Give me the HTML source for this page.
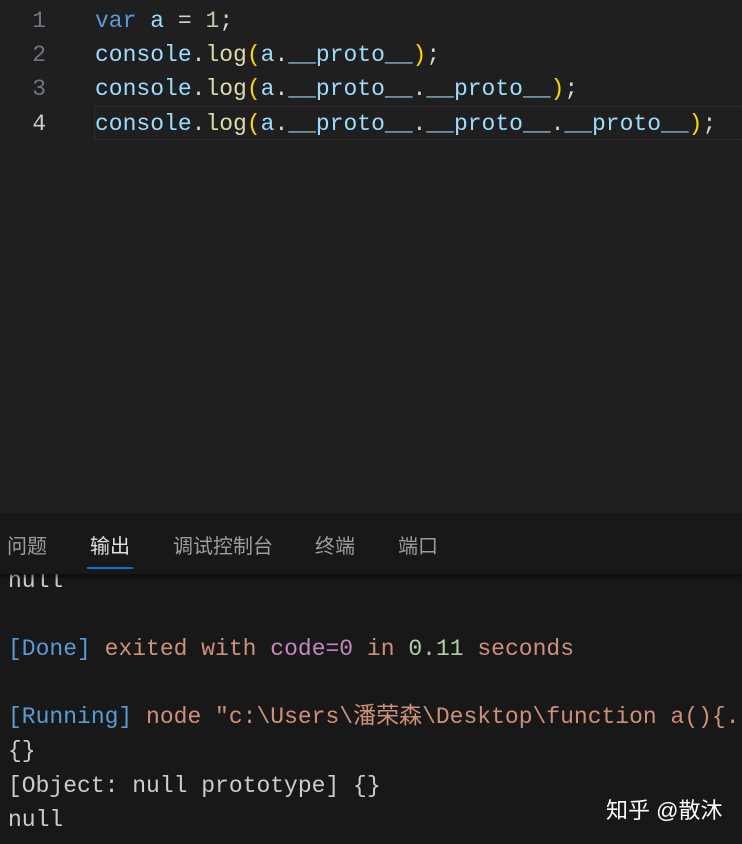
<!DOCTYPE html>
<html><head><meta charset="utf-8"><style>
body{margin:0;width:742px;height:843px;background:#1f1f1f;overflow:hidden;position:relative;font-family:"Liberation Mono","Noto Sans CJK SC",monospace;font-size:23px}
.l{position:absolute;white-space:pre;line-height:34px}
.n{color:#6e7681;width:46px;text-align:right;left:0}
.k{color:#569cd6}.v{color:#9cdcfe}.f{color:#dcdcaa}.p{color:#ffd700}.w{color:#d4d4d4}.num{color:#b5cea8}
#hl{position:absolute;left:94px;top:106px;width:660px;height:34px;border:1px solid #2c2c2c;box-sizing:border-box}
#panel{position:absolute;left:0;top:513px;width:742px;height:330px;background:#181818;border-top:1px solid #2b2b2b}
#tabs{position:absolute;left:0;top:513px;width:742px;height:61px;background:#181818;box-shadow:0 3px 4px rgba(0,0,0,.5);z-index:2;font-family:"Liberation Sans","Noto Sans CJK SC",sans-serif;font-size:20px;color:#9d9d9d}
#tabs span{position:absolute;top:17px}
#ul{position:absolute;left:87px;top:54px;width:46px;height:2px;background:#0078d4}
.o{color:#cccccc}
.bl{color:#569cd6}.or{color:#ce9178}.pu{color:#c586c0}.gr{color:#b5cea8}
</style></head><body>
<div id="hl"></div>
<div class="l n" style="top:4px">1</div>
<div class="l n" style="top:38px">2</div>
<div class="l n" style="top:72px">3</div>
<div class="l n" style="top:107px;color:#cccccc">4</div>
<div class="l" style="left:95px;top:4px"><span class="k">var</span> <span class="v">a</span> <span class="w">=</span> <span class="num">1</span><span class="w">;</span></div>
<div class="l" style="left:95px;top:38px"><span class="v">console</span><span class="w">.</span><span class="f">log</span><span class="p">(</span><span class="v">a</span><span class="w">.</span><span class="v">__proto__</span><span class="p">)</span><span class="w">;</span></div>
<div class="l" style="left:95px;top:72px"><span class="v">console</span><span class="w">.</span><span class="f">log</span><span class="p">(</span><span class="v">a</span><span class="w">.</span><span class="v">__proto__</span><span class="w">.</span><span class="v">__proto__</span><span class="p">)</span><span class="w">;</span></div>
<div class="l" style="left:95px;top:107px"><span class="v">console</span><span class="w">.</span><span class="f">log</span><span class="p">(</span><span class="v">a</span><span class="w">.</span><span class="v">__proto__</span><span class="w">.</span><span class="v">__proto__</span><span class="w">.</span><span class="v">__proto__</span><span class="p">)</span><span class="w">;</span></div>
<div id="panel"></div>
<div id="tabs"><span style="left:7px">问题</span><span style="left:90px;color:#e0e0e0">输出</span><span style="left:173px">调试控制台</span><span style="left:315px">终端</span><span style="left:398px">端口</span><div id="ul"></div></div>
<div class="l o" style="left:8px;top:564px">null</div>
<div class="l" style="left:8px;top:632px"><span class="bl">[Done]</span> <span class="or">exited with</span> <span class="pu">code=0</span> <span class="or">in</span> <span class="gr">0.11</span> <span class="or">seconds</span></div>
<div class="l" style="left:8px;top:700px"><span class="bl">[Running]</span> <span class="or">node "c:\Users\潘荣森\Desktop\function a(){.</span></div>
<div class="l o" style="left:8px;top:734px">{}</div>
<div class="l o" style="left:8px;top:769px">[Object: null prototype] {}</div>
<div class="l o" style="left:8px;top:803px">null</div>
<div class="l" style="left:606px;top:794px;font-family:'Liberation Sans','Noto Sans CJK SC',sans-serif;font-size:22px;color:#ffffff">知乎 @散沐</div>
</body></html>
